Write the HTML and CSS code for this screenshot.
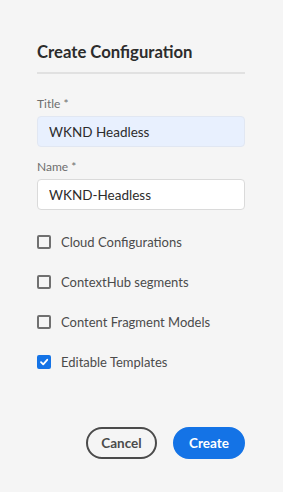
FILE: index.html
```html
<!DOCTYPE html>
<html lang="en">
<head>
    <meta charset="UTF-8">
    <meta name="viewport" content="width=device-width, initial-scale=1.0">
    <title>Create Configuration</title>
    <link rel="stylesheet" href="styles.css">
</head>
<body>
    <div class="dialog">
        <h1 class="dialog-title">Create Configuration</h1>
        <div class="dialog-divider"></div>

        <label class="field-label" for="title">Title *</label>
        <input id="title" class="field-input autofilled" type="text" value="WKND Headless">

        <label class="field-label" for="name">Name *</label>
        <input id="name" class="field-input" type="text" value="WKND-Headless">

        <ul class="check-list">
            <li class="check-item"><span class="check-box"></span>Cloud Configurations</li>
            <li class="check-item"><span class="check-box"></span>ContextHub segments</li>
            <li class="check-item"><span class="check-box"></span>Content Fragment Models</li>
            <li class="check-item">
                <span class="check-box checked">
                    <svg viewBox="0 0 10 10" width="10" height="10"><path d="M2 5.2 L4.2 7.4 L8.2 2.8" fill="none" stroke="#fff" stroke-width="1.8" stroke-linecap="round" stroke-linejoin="round"/></svg>
                </span>Editable Templates
            </li>
        </ul>

        <div class="button-bar">
            <button class="btn btn-secondary">Cancel</button>
            <button class="btn btn-primary">Create</button>
        </div>
    </div>
</body>
</html>
```

FILE: styles.css
```css
body {
    margin: 0;
    background-color: #f5f5f5;
    font-family: Lato, "Noto Sans", sans-serif;
    color: #2c2c2c;
}
.dialog {
    width: 208px;
    padding: 40px 38px 0 37px;
}
.dialog-title {
    margin: 0;
    font-size: 16.7px;
    font-weight: 700;
    line-height: 24px;
    color: #2c2c2c;
}
.dialog-divider {
    height: 2px;
    background-color: #e1e1e1;
    margin: 8px 0 22px;
}
.field-label {
    display: block;
    font-size: 12px;
    line-height: 16px;
    color: #6e6e6e;
    margin-bottom: 4px;
}
.field-input {
    display: block;
    box-sizing: border-box;
    width: 100%;
    height: 31px;
    margin: 0 0 12px;
    padding: 0 11px;
    border: 1px solid #dadada;
    border-radius: 4px;
    background-color: #fff;
    font-family: inherit;
    font-size: 13.5px;
    color: #2c2c2c;
}
.field-input.autofilled {
    background-color: #e8f0fe;
    border-color: #e1e7f2;
}
.check-list {
    list-style: none;
    margin: 0;
    padding: 0;
}
.check-item {
    display: flex;
    align-items: center;
    height: 40px;
    font-size: 13px;
    color: #4b4b4b;
}
.check-box {
    box-sizing: border-box;
    width: 14px;
    height: 14px;
    border: 2px solid #707070;
    border-radius: 2px;
    margin-right: 10px;
    display: flex;
    align-items: center;
    justify-content: center;
}
.check-box.checked {
    background-color: #1473e6;
    border-color: #1473e6;
}
.button-bar {
    display: flex;
    justify-content: flex-end;
    gap: 16px;
    margin-top: 45px;
}
.btn {
    box-sizing: border-box;
    height: 32px;
    padding: 0 10px;
    border-radius: 16px;
    font-family: inherit;
    font-size: 13.5px;
    font-weight: 700;
    cursor: pointer;
}
.btn-secondary {
    width: 71px;
    background: transparent;
    border: 2px solid #4b4b4b;
    color: #4b4b4b;
}
.btn-primary {
    width: 72px;
    background-color: #1473e6;
    border: 2px solid #1473e6;
    color: #fff;
}
```
